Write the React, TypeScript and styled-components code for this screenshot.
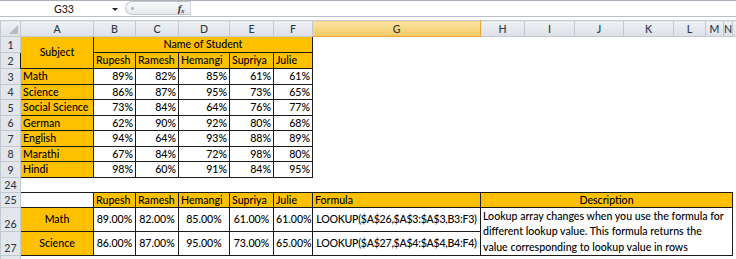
import React from "react";
import styled, { createGlobalStyle, css } from "styled-components";

const GlobalStyle = createGlobalStyle`
  html, body {
    margin: 0;
    padding: 0;
    background: #ffffff;
    overflow: hidden;
  }
  body {
    font-family: Lato, "Liberation Sans", sans-serif;
  }
`;

const SHEET_FONT = `Lato, "Liberation Sans", sans-serif`;
const FONT_SIZE = "10.6px";
const ORANGE = "#ffc000";
const HEAD_BORDER = "#c3c9d1";
const HEAD_TEXT = "#2b384a";

const COL_WIDTHS = [20, 73, 42, 43, 51, 44, 39, 168, 44, 50, 49, 50, 32, 18, 9, 4];
const LETTERS = ["A", "B", "C", "D", "E", "F", "G", "H", "I", "J", "K", "L", "M", "N"];
const STUDENTS = ["Rupesh", "Ramesh", "Hemangi", "Supriya", "Julie"];

const MARKS: [string, number[]][] = [
  ["Math", [89, 82, 85, 61, 61]],
  ["Science", [86, 87, 95, 73, 65]],
  ["Social Science", [73, 84, 64, 76, 77]],
  ["German", [62, 90, 92, 80, 68]],
  ["English", [94, 64, 93, 88, 89]],
  ["Marathi", [67, 84, 72, 98, 80]],
  ["Hindi", [98, 60, 91, 84, 95]],
];

const LOOKUPS = [
  { row: 26, subject: "Math", values: [89, 82, 85, 61, 61], formula: "LOOKUP($A$26,$A$3:$A$3,B3:F3)" },
  { row: 27, subject: "Science", values: [86, 87, 95, 73, 65], formula: "LOOKUP($A$27,$A$4:$A$4,B4:F4)" },
];

// row heights taken from the 80% zoomed sheet
const ROW_H: Record<string, number> = {
  "1": 16, "2": 16, "3": 16, "4": 15, "5": 16, "6": 15, "7": 16, "8": 15, "9": 16,
  "24": 15, "25": 15, "26": 24, "27": 23,
};

/* ---------- formula bar ---------- */

const Window = styled.div`
  width: 736px;
  height: 259px;
  overflow: hidden;
  background: #ffffff;
`;

const FormulaBar = styled.div`
  display: flex;
  align-items: stretch;
  height: 15px;
  border-top: 1px solid #a9b0ba;
  border-bottom: 1px solid #b9c0c9;
  margin-bottom: 3px;
  background: #ffffff;
`;

const NameBox = styled.div`
  position: relative;
  width: 120px;
  display: flex;
  align-items: center;
  justify-content: center;
  font-family: ${SHEET_FONT};
  font-size: ${FONT_SIZE};
  font-weight: 500;
  color: #1b1b1b;
  padding-left: 8px;
  box-sizing: border-box;
`;

const DropArrow = styled.span`
  position: absolute;
  right: 2px;
  top: 7px;
  width: 0;
  height: 0;
  border-left: 3px solid transparent;
  border-right: 3px solid transparent;
  border-top: 3px solid #222;
`;

const FxPill = styled.div`
  margin-left: 5px;
  width: 65px;
  height: 14px;
  border: 1px solid #c3c8cf;
  border-right: 0;
  border-radius: 8px 0 0 8px;
  background: linear-gradient(#f7f8fa, #e6e9ed);
  display: flex;
  align-items: center;
  justify-content: space-between;
  padding: 0 6px 0 5px;
  box-sizing: border-box;
`;

const Grip = styled.span`
  width: 3px;
  height: 3px;
  border-radius: 50%;
  background: #aab1ba;
`;

const Fx = styled.span`
  font-family: "Liberation Serif", serif;
  font-style: italic;
  font-weight: bold;
  font-size: 11px;
  color: #3a3a3a;
  letter-spacing: -0.5px;

  sub {
    font-size: 7px;
    vertical-align: -1px;
  }
`;

const FormulaInput = styled.div`
  flex: 1;
  border-left: 1px solid #d3d8de;
  background: #ffffff;
`;

/* ---------- grid ---------- */

const Sheet = styled.table`
  border-collapse: collapse;
  table-layout: fixed;
  width: 736px;
  font-family: ${SHEET_FONT};
  font-size: ${FONT_SIZE};
  font-weight: 500;
  color: #000000;
`;

const Row = styled.tr<{ $h: number }>`
  height: ${(p) => p.$h}px;
`;

const headBase = css`
  padding: 0;
  font-family: ${SHEET_FONT};
  font-weight: 500;
  font-size: ${FONT_SIZE};
  color: ${HEAD_TEXT};
  border: 1px solid ${HEAD_BORDER};
  white-space: nowrap;
  overflow: hidden;
  text-align: center;
  line-height: 12px;
`;

const Corner = styled.th`
  ${headBase};
  position: relative;
  background: linear-gradient(#eef1f4, #dfe3e8);

  &::after {
    content: "";
    position: absolute;
    right: 2px;
    bottom: 2px;
    width: 0;
    height: 0;
    border-left: 9px solid transparent;
    border-bottom: 9px solid #b5bbc4;
  }
`;

const ColHead = styled.th<{ $active?: boolean }>`
  ${headBase};
  background: ${(p) =>
    p.$active ? "linear-gradient(#fbe4a4, #f5c865)" : "linear-gradient(#eef1f4, #dde1e7)"};
  ${(p) =>
    p.$active &&
    css`
      border-right-color: #e2a43c;
      border-bottom: 1px solid #f0a640;
      color: #3b3320;
    `}
`;

const RowHead = styled.th<{ $bottom?: boolean }>`
  ${headBase};
  background: #e3e7ec;
  vertical-align: ${(p) => (p.$bottom ? "bottom" : "middle")};
  padding-bottom: ${(p) => (p.$bottom ? "1px" : "0")};
`;

type Fill = "orange" | "white";

const Cell = styled.td<{
  $fill?: Fill;
  $align?: "left" | "center" | "right";
  $valign?: "top" | "middle" | "bottom";
  $boxed?: boolean;
  $lines?: boolean;
  $tight?: boolean;
}>`
  padding: ${(p) => (p.$lines ? "1px 2px 0 2px" : p.$tight ? "0" : "0 2px")};
  background: ${(p) => (p.$fill === "orange" ? ORANGE : "#ffffff")};
  text-align: ${(p) => p.$align ?? "left"};
  vertical-align: ${(p) => p.$valign ?? "middle"};
  border: ${(p) => (p.$boxed ? "1px solid #1a1a1a" : "0")};
  white-space: nowrap;
  overflow: hidden;
  line-height: ${(p) => (p.$lines ? "15.3px" : "13px")};
  letter-spacing: ${(p) => (p.$tight ? "-0.25px" : "normal")};
`;

const Blank = styled.td`
  padding: 0;
  border: 0;
`;

const pct = (v: number) => `${v}%`;
const pct2 = (v: number) => `${v.toFixed(2)}%`;

export default function App() {
  return (
    <Window>
      <GlobalStyle />
      <FormulaBar>
        <NameBox>
          G33
          <DropArrow />
        </NameBox>
        <FxPill>
          <Grip />
          <Fx>
            f<sub>x</sub>
          </Fx>
        </FxPill>
        <FormulaInput />
      </FormulaBar>

      <Sheet>
        <colgroup>
          {COL_WIDTHS.map((w, i) => (
            <col key={i} style={{ width: w }} />
          ))}
        </colgroup>
        <tbody>
          <Row $h={16}>
            <Corner />
            {LETTERS.map((l) => (
              <ColHead key={l} $active={l === "G"}>
                {l}
              </ColHead>
            ))}
            <ColHead />
          </Row>

          <Row $h={ROW_H["1"]}>
            <RowHead>1</RowHead>
            <Cell $fill="orange" $boxed $align="center" rowSpan={2}>
              Subject
            </Cell>
            <Cell $fill="orange" $boxed $align="center" colSpan={5}>
              Name of Student
            </Cell>
            <Blank colSpan={9} />
          </Row>

          <Row $h={ROW_H["2"]}>
            <RowHead>2</RowHead>
            {STUDENTS.map((s) => (
              <Cell key={s} $fill="orange" $boxed>
                {s}
              </Cell>
            ))}
            <Blank colSpan={9} />
          </Row>

          {MARKS.map(([subject, values], i) => {
            const n = String(i + 3);
            return (
              <Row key={subject} $h={ROW_H[n]}>
                <RowHead>{n}</RowHead>
                <Cell $fill="orange" $boxed>
                  {subject}
                </Cell>
                {values.map((v, j) => (
                  <Cell key={j} $boxed $align="right">
                    {pct(v)}
                  </Cell>
                ))}
                <Blank colSpan={9} />
              </Row>
            );
          })}

          <Row $h={ROW_H["24"]}>
            <RowHead>24</RowHead>
            <Blank colSpan={15} />
          </Row>

          <Row $h={ROW_H["25"]}>
            <RowHead>25</RowHead>
            <Cell $boxed />
            {STUDENTS.map((s) => (
              <Cell key={s} $fill="orange" $boxed>
                {s}
              </Cell>
            ))}
            <Cell $fill="orange" $boxed>
              Formula
            </Cell>
            <Cell $fill="orange" $boxed $align="center" colSpan={7}>
              Description
            </Cell>
            <Blank />
          </Row>

          {LOOKUPS.map((r, i) => (
            <Row key={r.row} $h={ROW_H[String(r.row)]}>
              <RowHead $bottom>{r.row}</RowHead>
              <Cell $fill="orange" $boxed $align="center">
                {r.subject}
              </Cell>
              {r.values.map((v, j) => (
                <Cell key={j} $boxed $align="center">
                  {pct2(v)}
                </Cell>
              ))}
              <Cell $boxed $tight $align="center">
                {r.formula}
              </Cell>
              {i === 0 && (
                <Cell $boxed $lines $valign="top" colSpan={7} rowSpan={2}>
                  Lookup array changes when you use the formula for
                  <br />
                  different lookup value. This formula returns the
                  <br />
                  value corresponding to lookup value in rows
                </Cell>
              )}
              <Blank />
            </Row>
          ))}

          <Row $h={6}>
            <RowHead />
            <Blank colSpan={15} />
          </Row>
        </tbody>
      </Sheet>
    </Window>
  );
}
